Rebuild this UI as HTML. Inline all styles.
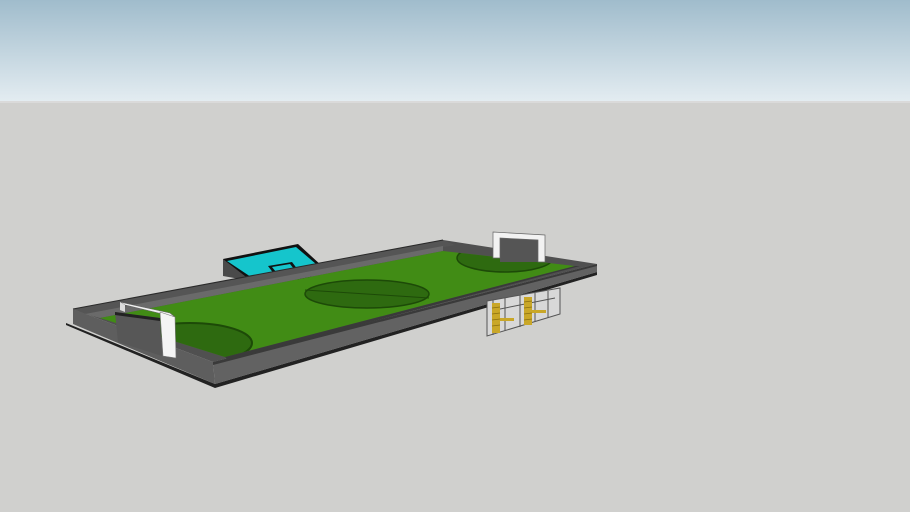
<!DOCTYPE html>
<html><head><meta charset="utf-8"><style>
html,body{margin:0;padding:0;width:910px;height:512px;overflow:hidden;background:#d0d0ce}
</style></head><body>
<svg width="910" height="512" viewBox="0 0 910 512" xmlns="http://www.w3.org/2000/svg">
<defs>
<linearGradient id="sky" x1="0" y1="0" x2="0" y2="1">
<stop offset="0" stop-color="#a0bccc"/><stop offset="1" stop-color="#e3ecf1"/>
</linearGradient>
<clipPath id="field"><polygon points="100,318 443,251 575,266 225,357"/></clipPath>
</defs>
<rect x="0" y="0" width="910" height="101" fill="url(#sky)"/>
<rect x="0" y="101" width="910" height="2" fill="#dadada"/>
<rect x="0" y="103" width="910" height="409" fill="#d0d0ce"/>

<polygon points="66,323 215,384 597,272 597,275 215,388 66,325" fill="#222"/>
<polygon points="73,309 443,240 597,264 213,362" fill="#505050"/>
<polygon points="223,259 223,276 262,283 262,270" fill="#4a4a4a"/>
<polygon points="223,259 298,244 322,266 250,280" fill="#111"/>
<polygon points="227,261 296,247 316,264 251,277" fill="#15c5cc"/>
<polygon points="268,266 292,262 298,270 274,274" fill="#111"/>
<polygon points="272,267 290,264 294,269 276,272" fill="#15c5cc"/>
<polygon points="292,270 306,268 312,278 298,280" fill="#111"/>
<polygon points="73,309 443,240 455,245 85,314" fill="#555"/>
<line x1="73" y1="309" x2="443" y2="240" stroke="#2a2a2a" stroke-width="1"/>
<polygon points="73,309 213,362 215,384 73,324" fill="#5e5e5e"/>
<polygon points="213,362 597,264 597,272 215,384" fill="#626262"/>
<polygon points="213,362 597,264 597,266 213,365" fill="#3a3a3a"/>
<polygon points="85,314 443,246 443,251 100,318" fill="#6a6a6a"/>
<polygon points="100,318 443,251 575,266 225,357" fill="#418c15"/>
<g clip-path="url(#field)">
<ellipse cx="367" cy="294" rx="62" ry="14" fill="#2e6a10" stroke="#1d4a08" stroke-width="1.5"/>
<line x1="305" y1="290" x2="429" y2="298" stroke="#1d4a08" stroke-width="1"/>
<ellipse cx="505" cy="258" rx="48" ry="14" fill="#2e6a10" stroke="#1d4a08" stroke-width="1.5"/>
<ellipse cx="190" cy="343" rx="62" ry="20" fill="#2e6a10" stroke="#1d4a08" stroke-width="2"/>
</g>
<polygon points="225,357 575,266 580,266 228,360" fill="#3a3a3a"/>
<rect x="500" y="238" width="40" height="24" fill="#555"/>
<polygon points="493,232 545,235 545,262 538,262 538,240 500,238 500,258 493,258" fill="#f2f2f2" stroke="#666" stroke-width="0.7"/>
<polygon points="120,302 170,313 175,317 125,305" fill="#f2f2f2" stroke="#666" stroke-width="0.6"/>
<polygon points="120,302 125,305 125,312 120,310" fill="#ddd"/>
<polygon points="160,312 175,317 176,358 163,356" fill="#f4f4f4" stroke="#777" stroke-width="0.6"/>
<polygon points="115,312 160,318 162,356 118,342" fill="#575757"/>
<polygon points="115,312 160,318 160,321 115,315" fill="#222"/>
<g stroke="#555" stroke-width="1" fill="none">
<polygon points="487,301 560,288 560,314 487,336" fill="#d8d8d8"/>
<line x1="493" y1="300" x2="493" y2="335"/>
<line x1="505" y1="298" x2="505" y2="331"/>
<line x1="520" y1="295" x2="520" y2="327"/>
<line x1="535" y1="293" x2="535" y2="322"/>
<line x1="548" y1="291" x2="548" y2="318"/>
<line x1="495" y1="310" x2="555" y2="298"/>
</g>
<g fill="#c9a728">
<rect x="492" y="303" width="8" height="30"/>
<rect x="524" y="297" width="8" height="28"/>
<rect x="498" y="318" width="16" height="3"/>
<rect x="530" y="310" width="16" height="3"/>
</g>
<g stroke="#8a6f10" stroke-width="0.8">
<line x1="492" y1="308" x2="500" y2="307"/><line x1="492" y1="314" x2="500" y2="313"/><line x1="492" y1="320" x2="500" y2="319"/><line x1="492" y1="326" x2="500" y2="325"/>
<line x1="524" y1="302" x2="532" y2="301"/><line x1="524" y1="308" x2="532" y2="307"/><line x1="524" y1="314" x2="532" y2="313"/><line x1="524" y1="320" x2="532" y2="319"/>
</g>
</svg>
</body></html>
